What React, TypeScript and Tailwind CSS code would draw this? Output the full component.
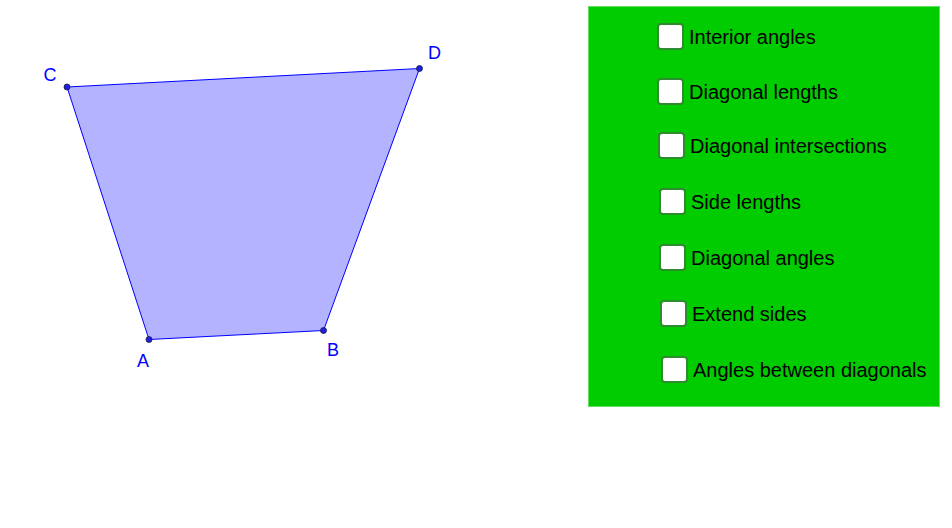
import React from "react";

type Opt = { label: string; cls: string };

const options: Opt[] = [
  { label: "Interior angles", cls: "mt-[16px] ml-[68px]" },
  { label: "Diagonal lengths", cls: "mt-[28px] ml-[68px]" },
  { label: "Diagonal intersections", cls: "mt-[27px] ml-[69px]" },
  { label: "Side lengths", cls: "mt-[29px] ml-[70px]" },
  { label: "Diagonal angles", cls: "mt-[29px] ml-[70px]" },
  { label: "Extend sides", cls: "mt-[29px] ml-[71px]" },
  { label: "Angles between diagonals", cls: "mt-[29px] ml-[72px]" },
];

const pts = {
  A: [149, 339.5],
  B: [323.5, 330.5],
  D: [419.5, 68.5],
  C: [67, 87],
};

function Canvas() {
  const poly = [pts.A, pts.B, pts.D, pts.C].map((p) => p.join(",")).join(" ");
  return (
    <svg width={588} height={528} className="block shrink-0">
      <polygon points={poly} fill="#b3b3ff" stroke="#0000ff" strokeWidth={1} />
      {Object.values(pts).map(([x, y], i) => (
        <circle key={i} cx={x} cy={y} r={3} fill="#1f1fe0" stroke="#1a1a40" strokeWidth={0.8} />
      ))}
      <g fill="#0000ff" fontFamily="'Liberation Sans', Arial, sans-serif" fontSize={18}>
        <text x={43.5} y={80.5}>C</text>
        <text x={428} y={59}>D</text>
        <text x={137} y={367}>A</text>
        <text x={327} y={356}>B</text>
      </g>
    </svg>
  );
}

export default function App() {
  return (
    <div className="w-[952px] h-[528px] bg-white flex overflow-hidden" style={{ fontFamily: "'Liberation Sans', Arial, sans-serif" }}>
      <Canvas />
      <div className="mt-[6px] w-[352px] h-[401px] bg-[#00cc00] border border-[#5fe05f] flex flex-col">
        {options.map((o) => (
          <label key={o.label} className={`flex items-center h-[27px] gap-[5px] ${o.cls}`}>
            <span className="w-[27px] h-[27px] shrink-0 rounded-[4px] bg-white border-2 border-[#2e8b2e]" />
            <span className="text-[20px] leading-none text-black whitespace-nowrap">{o.label}</span>
          </label>
        ))}
      </div>
    </div>
  );
}
